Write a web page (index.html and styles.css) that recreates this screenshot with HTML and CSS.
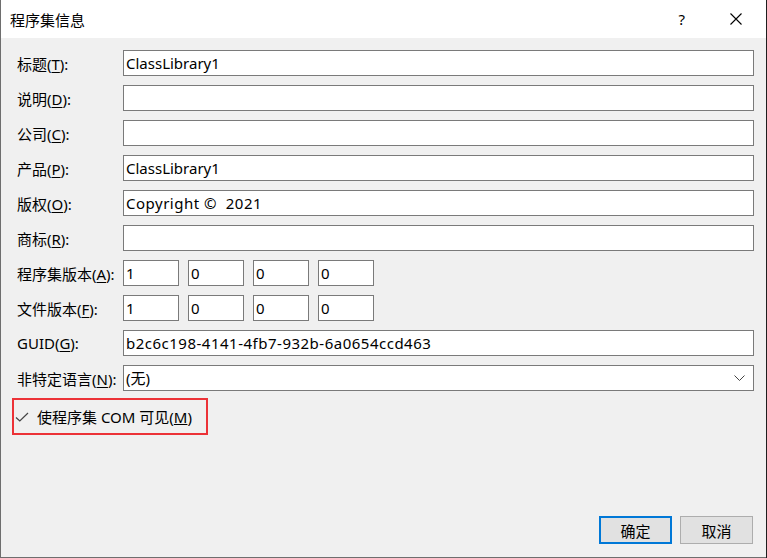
FILE: index.html
```html
<!DOCTYPE html>
<html lang="zh-CN">
<head>
<meta charset="utf-8">
<title>程序集信息</title>
<link rel="stylesheet" href="styles.css">
</head>
<body>

<div class="dialog">
	<div class="titlebar">
		<span class="title">程序集信息</span>
		<span class="help">?</span>
		<svg class="close" width="12" height="12" viewBox="0 0 12 12"><path d="M0.5 0.5 L11.5 11.5 M11.5 0.5 L0.5 11.5" stroke="#000" stroke-width="1.1" fill="none"/></svg>
	</div>

	<div class="content">
		<div class="form">
			<label>标题(<u>T</u>):</label>
			<div class="field">ClassLibrary1</div>

			<label>说明(<u>D</u>):</label>
			<div class="field"></div>

			<label>公司(<u>C</u>):</label>
			<div class="field"></div>

			<label>产品(<u>P</u>):</label>
			<div class="field">ClassLibrary1</div>

			<label>版权(<u>O</u>):</label>
			<div class="field wide">Copyright ©&nbsp; 2021</div>

			<label>商标(<u>R</u>):</label>
			<div class="field"></div>

			<label>程序集版本(<u>A</u>):</label>
			<div class="version">
				<div class="field small">1</div>
				<div class="field small">0</div>
				<div class="field small">0</div>
				<div class="field small">0</div>
			</div>

			<label>文件版本(<u>F</u>):</label>
			<div class="version">
				<div class="field small">1</div>
				<div class="field small">0</div>
				<div class="field small">0</div>
				<div class="field small">0</div>
			</div>

			<label>GUID(<u>G</u>):</label>
			<div class="field wide">b2c6c198-4141-4fb7-932b-6a0654ccd463</div>

			<label>非特定语言(<u>N</u>):</label>
			<div class="field combo">
				<span>(无)</span>
				<svg width="11" height="6" viewBox="0 0 11 6"><path d="M0.5 0.5 L5.5 5.5 L10.5 0.5" stroke="#444" stroke-width="1" fill="none"/></svg>
			</div>
		</div>

		<div class="check-row">
			<div class="highlight">
				<svg class="check" width="14" height="14" viewBox="0 0 14 14"><path d="M1 7.5 L4.8 11 L13 3" stroke="#444" stroke-width="1.2" fill="none"/></svg>
				<span>使程序集 COM 可见(<u>M</u>)</span>
			</div>
		</div>

		<div class="buttons">
			<button class="btn default">确定</button>
			<button class="btn">取消</button>
		</div>
	</div>
</div>

</body>
</html>
```

FILE: styles.css
```css
html, body {
	margin: 0;
	padding: 0;
	background: #1e1e1e;
}

body {
	font: 15px "Noto Sans", "Noto Sans CJK SC", sans-serif;
	color: #000;
}

.dialog {
	width: 765px;
	height: 557px;
	border-left: 1px solid #6e6e6e;
	border-bottom: 1px solid #6e6e6e;
	background: #f0f0f0;
	display: flex;
	flex-direction: column;
}

.titlebar {
	height: 38px;
	background: #fff;
	display: flex;
	align-items: center;
	padding-left: 9px;
	flex-shrink: 0;
}

	.title {
		flex: 1;
	}

	.help {
		font-size: 15px;
		margin-right: 45px;
	}

	.close {
		margin-right: 24px;
	}

.content {
	flex: 1;
	display: flex;
	flex-direction: column;
	padding: 12px 12px 13px 16px;
}

.form {
	display: grid;
	grid-template-columns: 106px 1fr;
	row-gap: 9px;
	align-items: center;
}

	.form label {
		white-space: nowrap;
	}

	.form u {
		text-underline-offset: 2px;
	}

.field {
	height: 24px;
	border: 1px solid #7a7a7a;
	background: #fff;
	padding: 0 2px;
	line-height: 24px;
	white-space: nowrap;
	overflow: hidden;
}

	.field.small {
		width: 50px;
	}

	.field.wide {
		letter-spacing: .5px;
	}

.version {
	display: flex;
	gap: 9px;
}

.combo {
	display: flex;
	align-items: center;
	justify-content: space-between;
	padding-right: 8px;
}

.check-row {
	margin-top: 7px;
	margin-left: -5px;
}

.highlight {
	display: inline-flex;
	align-items: center;
	gap: 8px;
	border: 2px solid #ec3237;
	width: 191px;
	height: 33px;
	padding-left: 1px;
}

.buttons {
	margin-top: auto;
	margin-right: 1px;
	display: flex;
	justify-content: flex-end;
	gap: 8px;
}

.btn {
	width: 73px;
	height: 28px;
	font: inherit;
	background: #e1e1e1;
	border: 1px solid #adadad;
	padding: 0;
}

	.btn.default {
		border: 2px solid #0078d7;
	}
```
